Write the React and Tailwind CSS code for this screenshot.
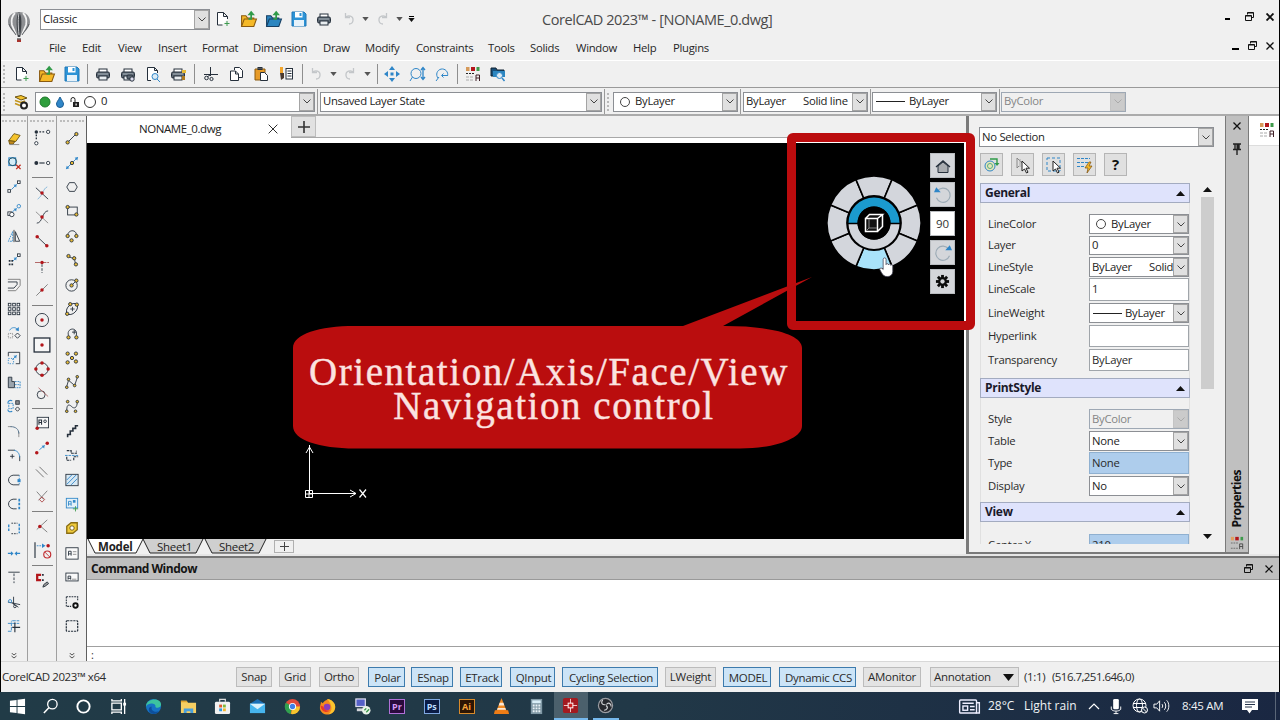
import React from "react";

const UI = "font-['Open_Sans','Noto_Sans',sans-serif]";
const K = "#26303c";
const B = "#2f86c8";
const G = "#e8bb36";
const R = "#b3161b";

function Ico({ children, c = "h-4 w-4" }) {
  return (
    <svg viewBox="0 0 16 16" className={"shrink-0 overflow-visible " + c} fill="none" stroke={K} strokeWidth="1">
      {children}
    </svg>
  );
}
const Dot = ({ x, y, f = G, r = 1.9, s = K }) => <circle cx={x} cy={y} r={r} fill={f} stroke={s} />;
const Red = ({ x, y }) => <circle cx={x} cy={y} r="2" fill={R} stroke="none" />;
const Sq = ({ x, y, w = 3, h = w, f = "#fff", s = K }) => <rect x={x} y={y} width={w} height={h} fill={f} stroke={s} />;

/* ---------- toolbar icons ---------- */
const NewDoc = () => (
  <Ico><path d="M7.5 14H2.5V1.5h6l4 4V8M8.500 1.500v4h4" fill="#fff" /><path d="M9.500 12.500h5M12 10v5" stroke="#3f9c50" /></Ico>
);
const Folder = ({ f = "#f5b928", d = "#8a5a10" }) => (
  <Ico c="h-[17px] w-[17px]">
    <path d="M1.500 14V4.500h4l1.500 2h6V8" fill={f} stroke={d} />
    <path d="M1.500 14.500l2.500-7h11.500l-2.500 7z" fill={f} stroke={d} />
    <path d="M8 7.500h2.500V2" stroke="#2f9a48" strokeWidth="1.600" /><path d="M8 3.500L10.500 0.500l2.500 3z" fill="#2f9a48" stroke="#2f9a48" />
  </Ico>
);
const Save = () => (
  <Ico><path d="M1 1h12l2 2v12H1z" fill="#2c93d6" stroke="#2179b8" /><rect x="4" y="1" width="7.500" height="5.500" fill="#fff" stroke="none" /><rect x="8.500" y="2" width="2" height="3" fill="#2c93d6" stroke="none" /><rect x="3" y="9" width="10" height="6" fill="#e6f2fa" stroke="none" /></Ico>
);
const Printer = ({ extra }) => (
  <Ico>
    <rect x="4" y="3" width="8" height="4" fill="#fff" />
    <rect x="1.500" y="6" width="13" height="6" rx="1.500" fill="#5d6873" />
    <rect x="4" y="10" width="8" height="4" fill="#e8edf0" /><path d="M3 8h10" stroke="#aab4bd" />
    {extra}
  </Ico>
);
const Undo = () => <Ico><path d="M4.500 2v4.500H9M4.500 6.500C7 3.500 12.500 5 12 9.500c-.3 2.500-2 3.500-4 3.500" stroke="#c3c6c9" strokeWidth="1.300" /></Ico>;
const Redo = () => <Ico><path d="M11.500 2v4.500H7M11.500 6.500C9 3.500 3.500 5 4 9.500c.3 2.500 2 3.500 4 3.500" stroke="#c3c6c9" strokeWidth="1.300" /></Ico>;
const Caret = ({ c = "#555" }) => <svg viewBox="0 0 8 5" className="h-[4px] w-[7px] shrink-0"><path d="M0 0h8L4 5z" fill={c} /></svg>;
const Palette = () => (
  <Ico>
    <rect x="1" y="1" width="3.500" height="4" fill="#d69a5a" stroke="none" /><rect x="6" y="1" width="4" height="4" fill={R} stroke="none" /><rect x="11.500" y="1" width="3" height="4" fill="#3d9a4a" stroke="none" />
    <path d="M1 7.500h9" stroke="#222" strokeDasharray="2 1" /><path d="M1 11h8M1 14h8" stroke="#aaa" strokeDasharray="3 1" />
    <path d="M11 15V9h3.500v6M11 12h3.500" stroke="#402028" />
  </Ico>
);

function Combo({ w, h = "h-[20px]", children, dis, cls = "" }) {
  return (
    <div className={`flex shrink-0 items-center overflow-hidden border text-[11.3px] tracking-[-0.28px] ${dis ? "border-[#9ea8b4] bg-[#f0f0f0] text-[#858585]" : "border-[#8c8f94] bg-white text-[#1c1c1c]"} ${h} ${w} ${cls}`}>
      <div className="flex h-full min-w-0 flex-1 items-center overflow-hidden whitespace-pre pl-[2px]">{children}</div>
      <div className={`flex h-full w-[15px] shrink-0 items-center justify-center border ${dis ? "border-[#c4c4c4] bg-[#cbcbcb]" : "border-[#a4a4a4] bg-[#e0e0e0]"}`}>
        <svg viewBox="0 0 8 5" className="h-[5px] w-[8px] shrink-0"><path d="M.5.5L4 4 7.500.5" fill="none" stroke={dis ? "#aaa" : "#444"} /></svg>
      </div>
    </div>
  );
}
const Cell = ({ w = "w-[25px]", children }) => <div className={`flex h-full shrink-0 items-center justify-center ${w}`}>{children}</div>;
const Sep = ({ w }) => <div className={`flex h-full shrink-0 items-center justify-center ${w}`}><div className="h-[20px] w-px bg-[#8e8e8e]" /></div>;
const Grip = () => <div className="h-[18px] w-[2px] shrink-0 border-l-2 border-dotted border-[#b8b8b8]" />;

const Restore = () => <svg viewBox="0 0 9 9" className="h-[9px] w-[9px] shrink-0"><path d="M2.500 2.500v-2h6v5h-2M.5 3.500h6v5h-6zM.5 4h6M2.500 1h6" fill="none" stroke="#111" /></svg>;
const Cross = ({ w = 1.2, c = "h-[8px] w-[8px]" }) => <svg viewBox="0 0 8 8" className={"shrink-0 " + c}><path d="M.5.5l7 7M7.500.5l-7 7" stroke="#111" strokeWidth={w} /></svg>;

/* ---------- menu ---------- */
const MENU = [
  ["File", "w-[33px]"], ["Edit", "w-[36px]"], ["View", "w-[40px]"], ["Insert", "w-[44px]"], ["Format", "w-[51px]"],
  ["Dimension", "w-[70px]"], ["Draw", "w-[42px]"], ["Modify", "w-[51px]"], ["Constraints", "w-[72px]"], ["Tools", "w-[42px]"],
  ["Solids", "w-[46px]"], ["Window", "w-[57px]"], ["Help", "w-[40px]"], ["Plugins", "w-[60px]"],
];

function Header() {
  return (
    <div className="flex h-[60px] shrink-0">
      <div className="w-[39px] shrink-0 pl-[6px] pt-[11px]">
        <svg viewBox="0 0 24 32" className="h-[32px] w-[24px]">
          <path d="M12 1C5 1 1 5 1 11c0 5 5 9 9 15h4c4-6 9-10 9-15C23 5 19 1 12 1z" fill="#8d8f92" />
          <path d="M8 2C5 5 4 9 5 14l5 12M16 2c3 3 4 7 3 12l-5 12" stroke="#f2f2f2" strokeWidth="1.800" fill="none" />
          <path d="M12 1c-3 4-3 12-1 25h2c2-13 2-21-1-25z" fill="#3e4247" />
          <path d="M12 2c-1 5-1 12 0 22" stroke="#c9cbcd" fill="none" />
          <path d="M2 13c1 4 5 7 7 11M22 13c-1 4-5 7-7 11" stroke="#5b5e62" fill="none" />
          <rect x="10" y="28.500" width="4" height="2.500" fill="#a8322c" /><path d="M10 28h4" stroke="#222" />
        </svg>
      </div>
      <div className="flex min-w-0 flex-1 flex-col">
        <div className="flex h-[38px] items-center">
          <Combo w="w-[170px]" h="h-[21px]"><span className="text-[11.500px]">Classic</span></Combo>
          <div className="flex items-center">
            <Cell><NewDoc /></Cell><Cell w="w-[26px]"><Folder /></Cell><Cell><Folder f="#2c86c0" d="#173f63" /></Cell><Cell><Save /></Cell><Cell w="w-[26px]"><Printer /></Cell>
            <Cell w="w-[23px]"><Undo /></Cell><Cell w="w-[10px]"><Caret /></Cell><Cell><Redo /></Cell><Cell w="w-[9px]"><Caret /></Cell>
            <div className="ml-[3px] flex w-[8px] flex-col items-center gap-px"><div className="h-px w-[5px] bg-black" /><Caret c="#111" /></div>
          </div>
          <div className="ml-[127px] w-[683px] whitespace-nowrap pt-[2px] text-[14.500px] tracking-[-0.440px] text-[#4a4a4a]">CorelCAD 2023™ - [NONAME_0.dwg]</div>
        </div>
        <div className="flex h-[22px] items-center pb-px pl-[9px]">
          {MENU.map(([t, w]) => <div key={t} className={`shrink-0 whitespace-nowrap text-[11.300px] tracking-[-0.280px] text-[#262626] ${w}`}>{t}</div>)}
        </div>
      </div>
      <div className="flex w-[60px] shrink-0 flex-col">
        <div className="flex h-[33px] items-center gap-[15px] pl-[6px]"><div className="mt-[5px] h-[2px] w-[5px] bg-black" /><Restore /><div className="-ml-[3px]"><Cross w={1.900} /></div></div>
        <div className="flex h-[25px] items-center gap-[9px] pl-[13px]"><div className="mt-[7px] h-[2px] w-[7px] bg-black" /><Restore /><Cross w={1.300} /></div>
      </div>
    </div>
  );
}

function Toolbar1() {
  return (
    <div className="flex h-[28px] shrink-0 items-center border-b border-t border-b-[#9a9a9a] border-t-white pl-[2px]">
      <Grip />
      <div className="w-[4px]" />
      <Cell><NewDoc /></Cell><Cell><Folder /></Cell><Cell><Save /></Cell><Sep w="w-[6px]" />
      <Cell><Printer /></Cell>
      <Cell><Printer extra={<><rect x="7" y="9" width="6" height="4" rx="1" fill="#5d6873" /><circle cx="12" cy="13" r="2.200" fill="#dde" /></>} /></Cell>
      <Cell><Ico><path d="M6 14.500H2.500V1.500h7l3 3V7M9.500 1.500v3h3" fill="#fff" /><circle cx="10" cy="10.500" r="3" stroke={B} fill="#dcebf5" /><path d="M12 13l3 3" stroke={B} /></Ico></Cell>
      <Cell><Printer extra={<><rect x="12" y="4" width="4" height="3" fill={G} stroke="none" /><rect x="12" y="10" width="3" height="4" fill="#b07a20" stroke="none" /></>} /></Cell>
      <Sep w="w-[8px]" />
      <Cell><Ico><path d="M7.500 1v9M1 8.500h14M7 9l-3 2" /><circle cx="3.500" cy="12" r="1.800" /><circle cx="8.500" cy="13" r="1.600" /></Ico></Cell>
      <Cell><Ico><path d="M6.500 4V1.500h5l3 3v7h-4" fill="#fff" /><path d="M2.500 5h5l3 3v6.500h-8z" fill="#fff" /><path d="M7.500 5v3h3" /></Ico></Cell>
      <Cell><Ico><path d="M2 3h10v11H2z" fill="#e79b28" stroke="#8a5a10" /><rect x="5" y="1.500" width="4" height="2" fill="#555" /><path d="M7.500 6.500h4l3 3v5h-7z" fill="#fff" /></Ico></Cell>
      <Cell><Ico><rect x="2" y="1" width="3" height="6" fill="#f1a52c" stroke="none" /><path d="M2 7h4v5L3 14z" fill="#4a3a30" stroke="none" /><rect x="8" y="2.500" width="6.500" height="10.500" fill="#fff" /><path d="M9.500 5h4M9.500 7.500h4M9.500 10h4" /></Ico></Cell>
      <Sep w="w-[8px]" />
      <Cell w="w-[19px]"><Undo /></Cell><Cell w="w-[16px]"><Caret /></Cell><Cell w="w-[18px]"><Redo /></Cell><Cell w="w-[16px]"><Caret /></Cell>
      <Sep w="w-[4px]" />
      <Cell><Ico><path d="M8 0l3 4H5zM8 16l3-4H5zM0 8l4-3v6zM16 8l-4-3v6z" fill={B} stroke="none" /><rect x="6.500" y="6.500" width="3" height="3" fill={B} stroke="none" /></Ico></Cell>
      <Cell><Ico><circle cx="7" cy="7.500" r="5" stroke={B} /><path d="M3.500 11L1 15" stroke={B} /><path d="M14 2v11M12 4l2-2.500L16 4M12 11l2 2.500L16 11" stroke={B} strokeWidth="1.300" /></Ico></Cell>
      <Cell><Ico><path d="M4 12A5.500 5.500 0 1 1 13.500 10M5 11l-3 4" stroke={B} /><path d="M13 9.500H8M9.500 7.500L7.500 9.500l2 2" stroke={B} /></Ico></Cell>
      <Sep w="w-[6px]" />
      <Cell><Palette /></Cell>
      <Cell><Ico><path d="M1 2h5l1 2h7v6H1z" fill="#174f7a" stroke="#123" /><path d="M3 5h12v6H3z" fill="#2c86c0" stroke="none" /><circle cx="9.500" cy="9.500" r="3" fill="#dcebf5" stroke={B} /><path d="M12 12l2.500 3" stroke={B} strokeWidth="1.500" /></Ico></Cell>
    </div>
  );
}

const Line = ({ w = "w-[4px]" }) => <div className={`flex h-full shrink-0 justify-center ${w}`}><div className="h-full w-px bg-[#9a9a9a]" /></div>;
function Toolbar2() {
  return (
    <div className="flex h-[28px] shrink-0 items-center border-b-2 border-[#ababab] pl-[2px] pt-px">
      <Grip />
      <div className="w-[8px]" />
      <Ico c="h-[16px] w-[16px]"><path d="M2 3l6-1.500L14 4 8 6z" fill="#f5c32c" stroke="#6b5310" /><path d="M2 6.500l6 2 4-1.500M2 9.500l5 2" stroke="#c2941a" strokeWidth="1.500" /><circle cx="11" cy="11.500" r="3" stroke="#222" strokeWidth="2" fill="#fff" /></Ico>
      <div className="w-[6px]" />
      <Combo w="w-[280px]">
        <svg viewBox="0 0 60 14" className="ml-[1px] h-[14px] w-[60px] shrink-0">
          <circle cx="6" cy="7" r="5" fill="#2f9e3c" stroke="#1f7a2b" /><path d="M21 2c2 4 3.500 5 3.500 7a3.500 3.500 0 0 1-7 0c0-2 1.500-3 3.500-7z" fill="#2f86c8" stroke="#1b5e94" />
          <path d="M32 7V4.500a2 2 0 0 1 4 0V7" fill="none" stroke="#222" /><rect x="34" y="7" width="6" height="5" fill="#222" /><rect x="36.500" y="8.500" width="1.200" height="2" fill="#fff" />
          <circle cx="51" cy="7" r="5.500" fill="#fff" stroke="#333" />
        </svg>
        <span className="ml-[2px]">0</span>
      </Combo>
      <Line w="w-[4px]" />
      <div className="w-[1px]" />
      <Combo w="w-[282px]">Unsaved Layer State</Combo>
      <Line w="w-[5px]" />
      <Grip />
      <div className="w-[4px]" />
      <Combo w="w-[125px]"><span className="ml-[4px] mr-[5px] h-[10px] w-[10px] rounded-full border border-[#444]" />ByLayer</Combo>
      <Line w="w-[5px]" />
      <Combo w="w-[125px]"><span className="w-[57px]">ByLayer</span>Solid line</Combo>
      <Line w="w-[4px]" />
      <Combo w="w-[125px]"><span className="ml-px mr-[4px] h-px w-[29px] bg-[#222]" />ByLayer</Combo>
      <Line w="w-[4px]" />
      <Combo w="w-[125px]" dis>ByColor</Combo>
    </div>
  );
}

/* ---------- vertical palettes ---------- */
const Arr = ({ x1 = 5, y1 = 11, x2 = 11, y2 = 5 }) => <><path d={`M${x1} ${y1}L${x2} ${y2}`} stroke={B} /><path d={`M${x2} ${y2}l-3.500 .5l3 3z`} fill={B} stroke="none" /></>;
const COL1 = [
  <><path d="M2 11l6-8 7 2-5 7z" fill="#f5c32c" stroke="#6b5310" /><path d="M2 11l7 1-2 3H3z" fill="#c48a1c" stroke="#6b5310" /><path d="M3 15.500h11" stroke="#888" /></>,
  <><rect x="2" y="2" width="8" height="9" fill="#d6ecf7" stroke={B} /><circle cx="6.500" cy="6.500" r="4.500" stroke="#145" /><path d="M10.500 10l5 5M15.500 10l-5 5" stroke="#c02a1e" strokeWidth="1.500" /></>,
  <><Sq x={1} y={11} /><Sq x={12} y={1} /><Arr /></>,
  <><Sq x={1} y={9} w={4} /><circle cx="5.500" cy="12" r="2.500" stroke={K} fill="#fff" /><circle cx="13.500" cy="2.500" r="2" stroke={B} /><Arr x1={6} y1={9} /></>,
  <><path d="M9.500 3v11h5z" /><path d="M6.500 3v11h-5z" stroke={B} strokeDasharray="2 1" /><path d="M8 1v14" stroke="#333" /></>,
  <><path d="M2 9h2M5 9h2M2 13h2M5 13h2" strokeWidth="2" /><Sq x={12} y={1} /><Arr x1={7} y1={9} x2={11} y2={5} /></>,
  <><path d="M1 1.500h14v7L10 14.500H1" stroke="#777" /><path d="M1 4.500h10.500v3L8 11.500H1" /></>,
  <>{[1, 6, 11].map((x) => [1, 6, 11].map((y) => <Sq key={x + "-" + y} x={x + 0.5} y={y + 0.500} w={3} />))}</>,
  <><path d="M3 5c2-4 7-4 9-1" stroke={B} /><path d="M13.500 6V1L9.500 4.500z" fill={B} stroke="none" /><rect x="1.500" y="8.500" width="5" height="5" strokeDasharray="1 1" stroke="#777" /><path d="M12 8l3 3-3 3-3-3z" /></>,
  <><path d="M1.500 6V1.500h13v13H10" /><path d="M1.500 8.500h6v6h-6z" strokeDasharray="1.500 1.500" stroke={B} /><Arr x1={6} y1={10} x2={11} y2={5} /></>,
  <><path d="M1.500 14.500v-12h4v5h3v7z" fill="#9aa4ad" /><path d="M9 7.500h6v7H9M9 11h5" stroke={B} strokeDasharray="2 1" /></>,
  <><path d="M1 5c0-3 2-4 5-3M1 12c0 3 3 3 5 2" stroke={B} strokeWidth="1.300" /><rect x="2" y="5" width="5" height="6" stroke={B} strokeDasharray="2 1" /><Sq x={10} y={2} w={4} f="#8d8f92" /><path d="M12 9l2.500 2.500L12 14l-2.500-2.500z" /></>,
  <><path d="M1 3h4M13.500 9v6" stroke="#888" /><path d="M4 3c6 0 9.500 3 9.500 8" stroke="#4a6a86" /></>,
  <><path d="M1 2.500h8M14.500 9v6" /><path d="M8 2.500c4 1 6 3 6.500 8" stroke={B} /><path d="M3.500 9.500h5M6 7v5" /></>,
  <><path d="M14 2.500H7c-7 1-7 10 0 11h7" /><path d="M14 2.500v11" stroke={B} strokeDasharray="1.500 1.500" /><rect x="12" y="7" width="3.500" height="3.500" fill={B} stroke="none" /></>,
  <><path d="M11 2.500H7c-7 1-7 10 0 11h4" /><path d="M14 2v12" stroke={B} strokeDasharray="3 1.500" strokeWidth="2" /></>,
  <><path d="M5 2.500h7M5 14.500h7" stroke={K} strokeDasharray="2 1" /><path d="M2 4v9M14 3v11" stroke={B} strokeDasharray="3 1.500" strokeWidth="1.600" /></>,
  <><path d="M1 8.500h5M15 8.500h-5" stroke={B} strokeWidth="1.300" /><path d="M7.500 8.500L4.500 6v5zM8.500 8.500L11.500 6v5z" fill={B} stroke="none" /></>,
  <><path d="M1.500 2.500h13" /><path d="M8 4v11" strokeDasharray="3 1.500" /></>,
  <><path d="M7.500 2v9M1 8l14 3M6 9l7 5" /><circle cx="3.500" cy="7" r="1.800" stroke={B} /><circle cx="9" cy="13" r="1.500" /></>,
  <><path d="M6 2h8M1 5h13M1 14h4V2" stroke={B} strokeDasharray="4 1" /><path d="M9 4v11M6 9.500h9" strokeWidth="1.300" /></>,
];
const COL2 = [
  <><circle cx="1.500" cy="1" r="2" fill={K} stroke="none" /><path d="M5 1h6" strokeDasharray="2 1.500" strokeWidth="1.500" /><Dot x={15} y={1} f="#fff" /><path d="M1.500 4v6" strokeDasharray="2 1.500" strokeWidth="1.500" /><Dot x={1.500} y={14} f="#fff" /></>,
  <><circle cx="1.500" cy="8" r="2.200" fill={K} stroke="none" /><path d="M5 8h6" strokeWidth="1.300" /><Dot x={15} y={8} f="#fff" /></>,
  null,
  <><path d="M1 2l14 13" /><path d="M14 1C9 3 9 11 3 15" stroke="#7fb4d8" /><Red x={8} y={8} /></>,
  <><path d="M1 2l14 13" stroke="#888" /><path d="M15 1C8 1 9 15 2 15" /><Red x={8} y={8} /></>,
  <><path d="M2.500 3l11 10.500" /><Red x={2.500} y={3} /><Red x={13.500} y={13.500} /></>,
  <><path d="M0 4h16" stroke="#a55" strokeDasharray="6 1" /><path d="M8 6v10" strokeDasharray="3 1.500" /><Red x={8} y={4} /></>,
  <><path d="M1.500 14.500l13-13" stroke="#777" /><Red x={8} y={8} /></>,
  null,
  <><circle cx="8" cy="8" r="7.500" /><Red x={8} y={8} /></>,
  <><rect x="-1" y="0" width="18" height="16" fill="#f7f7f7" strokeWidth="1.500" /><Red x={8} y={8} /></>,
  <><circle cx="8" cy="8" r="7" /><Red x={8} y={1} /><Red x={8} y={15} /><Red x={1} y={8} /><Red x={15} y={8} /></>,
  <><circle cx="7" cy="10" r="4.500" /><path d="M4 2l11 10" stroke="#a66" /></>,
  null,
  <><rect x="2.500" y="1.500" width="13" height="12" fill="#f8f8f8" /><path d="M4.500 10V4.500h3V10M4.500 7.500h3" strokeWidth="1.200" /><circle cx="11.500" cy="6" r="1.500" /><Red x={2.500} y={14} /></>,
  <><Arr x1={5} y1={10} x2={11} y2={5} /><Red x={2} y={13.500} /><Red x={14} y={2.500} /></>,
  <path d="M1 5l9 9M5 2l9 9" stroke="#666" />,
  <><path d="M2 3l8 9M14 2L4 13" stroke="#777" /><path d="M5 12l3-3 3 3-3 3z" stroke="#a44" /></>,
  null,
  <><path d="M14 1L2 12M6 8l8 7" stroke="#777" /><Red x={5.500} y={8.500} /></>,
  <><path d="M0 -2v18" strokeWidth="1.300" /><path d="M2 2h9" stroke={B} strokeDasharray="2 1" /><path d="M8 -0.500L12 2 8 4.500z" fill={B} stroke="none" /><Red x={15} y={2} /><circle cx="14" cy="12" r="4" stroke="#c02a2e" strokeWidth="1.300" /><path d="M11 9l6 6" stroke="#c02a2e" /></>,
  null,
  <><path d="M7 1H2.500v6H7" stroke={R} strokeWidth="2.600" /><path d="M8 1h2M8 7h2" strokeWidth="2" /><path d="M9 15l1-3 4-3 1.500 2-4 3z" fill="#999" /></>,
];
const COL3 = [
  <><path d="M3 13L13 3" /><Dot x={3} y={13} /><Dot x={13} y={3.500} /></>,
  <><path d="M2 14L14 2" stroke={B} /><path d="M1 15l1-4 3 3zM15 1l-1 4-3-3z" fill={B} stroke="none" /><Dot x={8} y={8} /></>,
  <path d="M5 3h6l3 5-3 5H5L2 8z" />,
  <><rect x="3" y="3.500" width="11" height="9" /><Dot x={3} y={3.500} /><Dot x={13} y={12} /></>,
  <><path d="M3 8c0-8 11-8 10 0" /><Dot x={3} y={8} /><Dot x={13} y={8} /><Dot x={7.500} y={13} /></>,
  <><path d="M4 4l7 3 1 7" /><Dot x={4} y={3.500} /><Dot x={10.500} y={6} /><Dot x={12.500} y={13} /></>,
  <><circle cx="7.500" cy="8.500" r="6.500" /><path d="M8 8l5-5" /><Dot x={7.500} y={8.500} /><Dot x={13} y={3} /></>,
  <><ellipse cx="8" cy="8" rx="7.500" ry="5" transform="rotate(-45 8 8)" /><path d="M6 8h5M8.500 5.500v5" /><Dot x={6} y={2.500} /><Dot x={13.500} y={3} /><Dot x={2.500} y={13.500} /></>,
  <><path d="M4 11C1 2 15 0 13 11M8 7h5M10.500 4.500v5" /><Dot x={4} y={13} /><Dot x={13} y={13} /></>,
  <><Dot x={3} y={3} /><Dot x={12.500} y={3} /><Dot x={8} y={8} /><Dot x={3} y={13} /><Dot x={12.500} y={12} /></>,
  <><path d="M2 13L4 6l7 6 3-9" /><Dot x={2} y={14} r={1.500} /><Dot x={4} y={5} r={1.500} /><Dot x={11} y={12} r={1.500} /><Dot x={14} y={2} r={1.500} /></>,
  <><path d="M2 13C2 4 6 7 8 9s6 2 6-6" /><Dot x={2} y={14} r={1.500} /><Dot x={3} y={3} r={1.500} /><Dot x={12} y={14} r={1.500} /><Dot x={14} y={3} r={1.500} /></>,
  <path d="M3 15v-3h4M6 11.500V8h4M9 8V5h4M12 5V2h3" strokeWidth="1.800" />,
  <><path d="M2 3h5v3h6V3M2 10v4h5M10 14V10h5" strokeDasharray="3 1" strokeWidth="1.300" /><path d="M0 8.500h16" stroke={B} strokeDasharray="3 1" /></>,
  <><rect x="1" y="1.500" width="14" height="13" fill="#d8e8f3" /><path d="M2 8l6-6M2 13L13 2M7 13.500L14 6.500" stroke={B} /></>,
  <><rect x="1.500" y="1.500" width="13" height="11" stroke={B} fill="#e3f0f8" /><path d="M4 10V5h3v5M4 8h3" stroke={B} /><rect x="9" y="3.500" width="3" height="3" fill={B} stroke="none" /><path d="M9 13.500h6M12 10.500v6" stroke="#3f9c50" /></>,
  <><path d="M2 6l5-4h7v8l-5 4H2z" fill="#f0cb3c" stroke="#8a6d14" strokeWidth="1.500" /><circle cx="8" cy="8" r="2.500" fill="#fff" stroke="#6b5310" /></>,
  <><rect x="1" y="2" width="14" height="13" fill="#fafafa" /><path d="M4 11V6h3v5M4 9h3" /><path d="M9 6.500h4M9 9.500h4" stroke="#888" /></>,
  <><rect x="1" y="3.500" width="14" height="9" fill="#fafafa" /><path d="M3.500 11V7h3v4M3.500 9.500h3" /><path d="M8 10.500h5" stroke="#888" /></>,
  <><path d="M1.500 2h13v5M1.500 2v11H7" strokeDasharray="2 1" strokeWidth="1.200" /><circle cx="12" cy="12" r="2.500" fill="#fff" stroke="#111" strokeWidth="2.200" /></>,
  <rect x="1.500" y="2" width="13" height="12" rx="1" strokeDasharray="2.500 1" strokeWidth="1.400" />,
];

const Chevrons = () => <svg viewBox="0 0 6 6" className="h-[6px] w-[6px]"><path d="M.5 0L3 2 5.500 0M.5 3L3 5 5.500 3" fill="none" stroke="#555" /></svg>;
function Palettes({ items, w, more, last }) {
  return (
    <div className={`flex h-full shrink-0 flex-col items-center overflow-hidden border-r pt-[4px] ${last ? "border-[#5f5f5f]" : "border-[#a0a0a0]"} ${w}`}>
      <div className="mb-[4px] h-[2px] w-[24px] shrink-0 border-t-2 border-dotted border-[#bdbdbd]" />
      {items.map((it, i) => it
        ? <div key={i} className="flex h-[24.400px] shrink-0 items-center"><Ico c="h-[14px] w-[14px]">{it}</Ico></div>
        : <div key={i} className="flex h-[5.600px] w-[21px] shrink-0 items-center"><div className="h-px w-full bg-[#808080]" /></div>)}
      {more && <div className="mb-[2px] mt-auto"><Chevrons /></div>}
    </div>
  );
}

/* ---------- drawing area ---------- */
const pt = (r, a) => [50 + r * Math.cos((a * Math.PI) / 180), 50 + r * Math.sin((a * Math.PI) / 180)].map((n) => n.toFixed(2)).join(" ");
const seg = (r1, r2, a, b) => `M${pt(r1, a)}A${r1} ${r1} 0 0 1 ${pt(r1, b)}L${pt(r2, b)}A${r2} ${r2} 0 0 0 ${pt(r2, a)}Z`;
function Wheel() {
  return (
    <svg viewBox="0 0 100 100" className="h-[100px] w-[100px]">
      {[0, 1, 2, 3, 4, 5, 6, 7].map((i) => <path key={i} d={seg(47, 27, i * 45 - 22.500, i * 45 + 22.500)} fill={i === 2 ? "#a9e3fa" : "#d3d6dc"} stroke="#000" strokeWidth="1.600" />)}
      <path d={seg(25.500, 16.500, 180, 360)} fill="#1b9ace" /><path d={seg(25.500, 16.500, 1, 179)} fill="#d3d6dc" />
      <path d="M24 50.500h52" stroke="#000" strokeWidth="1.600" /><circle cx="50" cy="50" r="16.500" fill="#000" />
      <path d="M41.500 45.500h12v13h-12zM41.500 45.500l4-4h13l-5 4M58.500 41.500v12l-5 5" stroke="#fff" strokeWidth="1.500" fill="#111" /><path d="M45 46v9h8M45 55l-3 3" stroke="#888" fill="none" />
    </svg>
  );
}
const NavBtn = ({ children, cls = "bg-[#d4d6da]" }) => <div className={`flex h-[25px] w-[25px] items-center justify-center border border-[#b9bcc0] text-[11.500px] ${cls}`}>{children}</div>;
const GearShape = () => (
  <Ico c="h-[15px] w-[15px]"><g fill="#0b0b0b" stroke="none">{[0, 45, 90, 135].map((a) => <rect key={a} x="6.500" y="1" width="3" height="14" transform={`rotate(${a} 8 8)`} />)}<circle cx="8" cy="8" r="4.700" /></g><circle cx="8" cy="8" r="2.300" fill="#d4d6da" stroke="none" /></Ico>
);

function Canvas() {
  return (
    <div className="relative h-[396px] shrink-0 overflow-hidden border-r-2 border-white bg-black">
      <svg viewBox="0 0 80 70" className="absolute left-[212px] top-[300px] h-[70px] w-[80px]" fill="none" stroke="#fff">
        <path d="M10.500 51V2M7 10l3.500-6L14 10M10 50.500h47M51 47l6 3.500-6 3.500" /><path d="M6.500 47.500h7v7h-7zM10 47v8M6 51h8" />
        <path d="M60.500 46.500l6.500 8M67 46.500l-6.500 8" strokeWidth="1.200" />
      </svg>
      <div className="absolute left-[737px] top-[30px]"><Wheel /></div>
      <svg viewBox="0 0 16 24" className="absolute left-[792px] top-[113px] h-[23px] w-[16px]"><path d="M4 13V3.500c0-2 3-2 3 0V9c0-1.500 2.500-1.500 2.500.3 0-1.300 2.500-1.300 2.500.5 0-1.200 2-1 2 .7V16c0 3-2 5.500-5.500 5.500S4 20 2 17l-1.500-3c0-2 2-2 3.500 0z" fill="#fff" stroke="#445" strokeWidth=".8" /></svg>
      <div className="absolute left-[843px] top-[10px] flex flex-col gap-[4px]">
        <NavBtn><Ico><path d="M1 9l7-6 7 6" strokeWidth="1.400" /><path d="M3 8v6.500h10V8L8 4z" fill="#a9acb0" /></Ico></NavBtn>
        <NavBtn><Ico c="h-[18px] w-[18px]"><path d="M3 4.500a6.300 6.300 0 1 1-.8 6" stroke="#9cabb6" /><path d="M0 5.500h6L2 1z" fill={B} stroke="none" /></Ico></NavBtn>
        <NavBtn cls="bg-white text-[#333]">90</NavBtn>
        <NavBtn><Ico c="h-[18px] w-[18px]"><path d="M13 4.500a6.300 6.300 0 1 0 .8 6" stroke="#9cabb6" /><path d="M16 5.500h-6L14 1z" fill={B} stroke="none" /></Ico></NavBtn>
        <NavBtn><GearShape /></NavBtn>
      </div>
    </div>
  );
}

function DocArea() {
  return (
    <div className="flex w-[879px] shrink-0 flex-col">
      <div className="flex h-[27px] shrink-0 bg-[#f0f0f0]">
        <div className="flex w-[204px] items-center bg-white pb-[2px] pl-[52px] text-[11.500px] text-[#222]">
          <span className="w-[129px] whitespace-nowrap tracking-[-0.420px]">NONAME_0.dwg</span><Cross w={0.700} c="h-[10px] w-[10px]" />
        </div>
        <div className="flex flex-1 flex-col">
          <div className="flex h-[22px] border-b border-[#a8a8a8]">
            <div className="flex w-[25px] items-center justify-center border border-[#bdbdbd] bg-[#e1e1e1]"><svg viewBox="0 0 12 12" className="h-[12px] w-[12px]"><path d="M6 0v12M0 6h12" stroke="#333" strokeWidth="1.600" /></svg></div>
          </div>
          <div className="flex-1 bg-white" />
        </div>
      </div>
      <Canvas />
      <div className="relative flex h-[15px] shrink-0 items-center bg-[#f0f0f0] text-[11.500px] text-[#222]">
        <svg viewBox="0 0 184 15" className="absolute left-0 top-0 h-[15px] w-[184px]" stroke="#222">
          <path d="M118 0l7 14h47l7-14" fill="#cfcfcf" /><path d="M56 0l7 14h46l7-14" fill="#cfcfcf" /><path d="M1 0l7 14h41l7-14" fill="#fff" />
        </svg>
        <div className="relative w-[59px] pl-[11px] font-bold tracking-[-0.200px]">Model</div>
        <div className="relative w-[62px] pl-[11px] tracking-[-0.300px]">Sheet1</div>
        <div className="relative w-[66px] pl-[11px] tracking-[-0.300px]">Sheet2</div>
        <div className="relative flex h-[13px] w-[20px] items-center justify-center border border-[#b0b0b0]"><svg viewBox="0 0 9 9" className="h-[9px] w-[9px]"><path d="M4.500 0v9M0 4.500h9" stroke="#444" /></svg></div>
      </div>
    </div>
  );
}

/* ---------- properties ---------- */
const Lbl = ({ children }) => <div className="w-[108px] shrink-0 pl-[7px]">{children}</div>;
const Field = ({ h, cls = "bg-white border-[#a0a5aa]", children }) => <div className={`flex w-[100px] shrink-0 items-center border pl-[2px] ${h} ${cls}`}>{children}</div>;
const Row = ({ label, children, mt }) => <div className={`flex shrink-0 items-center text-[#2a2a2a] ${mt}`}><Lbl>{label}</Lbl>{children}</div>;
const Sect = ({ t, mt }) => (
  <div className={`-ml-px flex h-[20px] w-[210px] shrink-0 items-center justify-between border border-[#a3abc0] bg-[#dfe3fc] pl-[4px] pr-[4px] text-[12px] font-bold tracking-[-0.300px] text-[#1a1a2a] ${mt}`}>
    {t}<svg viewBox="0 0 9 5" className="h-[5px] w-[9px]"><path d="M4.500 0L9 5H0z" fill="#111" /></svg>
  </div>
);
const PBtn = ({ children }) => <div className="flex h-[23px] w-[23px] items-center justify-center border border-[#b5b5b5] bg-[#e0e0e0]">{children}</div>;
const Cursor = <path d="M7 4v10l2.500-2 2 4 1.500-.8-2-4h3.500z" fill="#fff" stroke="#222" />;

function Properties() {
  return (
    <div className="flex w-[259px] shrink-0 flex-col border-b-2 border-l-[3px] border-[#7a7a7a] pl-[10px] pt-[11px] text-[11.300px] tracking-[-0.230px]">
      <Combo w="w-[235px]">No Selection</Combo>
      <div className="mt-[6px] flex shrink-0 gap-[8px] pl-px">
        <PBtn><Ico><circle cx="6" cy="9" r="5" stroke={B} fill="#e6e7b8" /><circle cx="6" cy="9" r="2.500" stroke="#5a8" /><path d="M6 2h7v5" stroke="#2f9a48" strokeWidth="1.400" /><path d="M13 9l-2.500-3h5z" fill="#2f9a48" stroke="none" /></Ico></PBtn>
        <PBtn><Ico><path d="M2 1v10l2-2M2 1l5 5" stroke="#888" /><path d="M5 2v8" stroke="#aaa" />{Cursor}</Ico></PBtn>
        <PBtn><Ico><rect x="1" y="1" width="13" height="13" stroke={B} strokeDasharray="3 2" />{Cursor}</Ico></PBtn>
        <PBtn><Ico><path d="M0 1.500h13M0 5.500h13M0 9.500h7" stroke={B} strokeDasharray="3 1" /><path d="M12 5l-4 6h3l-1 5 5-7h-3l2-4z" fill="#f5b928" stroke="#7a4d10" strokeWidth=".7" /></Ico></PBtn>
        <PBtn><span className="text-[15px] font-bold text-[#111]">?</span></PBtn>
      </div>
      <div className="mt-[7px] flex h-[361px] shrink-0 overflow-hidden pl-px">
        <div className="flex w-[210px] shrink-0 flex-col border-x border-[#e0e0e0]">
          <Sect t="General" mt="" />
          <Row label="LineColor" mt="mt-[11px]"><Combo w="w-[100px]"><span className="ml-[4px] mr-[5px] h-[10px] w-[10px] shrink-0 rounded-full border border-[#444]" />ByLayer</Combo></Row>
          <Row label="Layer" mt="mt-[2px]"><Combo w="w-[100px]" h="h-[19px]">0</Combo></Row>
          <Row label="LineStyle" mt="mt-[2px]"><Combo w="w-[100px]" h="h-[20px]"><span className="w-[57px] shrink-0">ByLayer</span>Solid</Combo></Row>
          <Row label="LineScale" mt="mt-[1px]"><Field h="h-[23px]">1</Field></Row>
          <Row label="LineWeight" mt="mt-[2px]"><Combo w="w-[100px]" h="h-[20px]"><span className="ml-px mr-[3px] h-px w-[29px] shrink-0 bg-[#222]" />ByLayer</Combo></Row>
          <Row label="Hyperlink" mt="mt-[2px]"><Field h="h-[22px]" /></Row>
          <Row label="Transparency" mt="mt-[2px]"><Field h="h-[22px]">ByLayer</Field></Row>
          <Sect t="PrintStyle" mt="mt-[7px]" />
          <Row label="Style" mt="mt-[11px]"><Combo w="w-[100px]" dis>ByColor</Combo></Row>
          <Row label="Table" mt="mt-[2px]"><Combo w="w-[100px]">None</Combo></Row>
          <Row label="Type" mt="mt-[1px]"><Field h="h-[22px]" cls="bg-[#aecdec] border-[#8fb0d0]">None</Field></Row>
          <Row label="Display" mt="mt-[2px]"><Combo w="w-[100px]">No</Combo></Row>
          <Sect t="View" mt="mt-[6px]" />
          <Row label="Center X" mt="mt-[12px]"><Field h="h-[22px]" cls="bg-[#aecdec] border-[#8fb0d0]">210</Field></Row>
        </div>
        <div className="ml-[10px] flex w-[14px] shrink-0 flex-col items-center pt-[4px]">
          <svg viewBox="0 0 9 5" className="h-[5px] w-[9px] shrink-0"><path d="M4.500 0L9 5H0z" fill="#111" /></svg>
          <div className="mt-[5px] h-[192px] w-[13px] shrink-0 bg-[#cdcdcd]" />
          <svg viewBox="0 0 9 5" className="mb-[5px] mt-auto h-[5px] w-[9px] shrink-0"><path d="M0 0h9L4.500 5z" fill="#111" /></svg>
        </div>
      </div>
    </div>
  );
}

function Rail() {
  return (
    <>
      <div className="flex w-[24px] shrink-0 flex-col items-center border-x border-b-2 border-[#7a7a7a] bg-[#c0c0c0] pb-[2px] pt-[6px]">
        <Cross w={1.300} />
        <svg viewBox="0 0 10 12" className="mt-[13px] h-[12px] w-[10px]"><path d="M1 1h8M3 1v5M7 1v5M1 6.500h8M5 7v5" stroke="#222" strokeWidth="1.400" fill="none" /><rect x="4.500" y="1" width="2.500" height="5.500" fill="#222" /></svg>
        <div className="mb-[9px] mt-auto rotate-180 text-[12px] font-bold tracking-[-0.500px] text-[#111] [writing-mode:vertical-rl]">Properties</div>
        <Ico c="h-[14px] w-[14px]"><rect x="1" y="1" width="3.500" height="4" fill="#e0a060" stroke="none" /><rect x="6" y="1" width="4" height="4" fill={R} stroke="none" /><rect x="12" y="1" width="3" height="4" fill="#3d9a4a" stroke="none" /><path d="M1 8h9M1 14h8" stroke="#666" strokeDasharray="2 1" /><path d="M11 15V9h3.500v6M11 12h3.500" stroke="#444" /></Ico>
      </div>
      <div className="flex flex-1 flex-col"><div className="flex h-[30px] items-center justify-center border-b border-[#ddd] bg-white pb-[2px] pl-[5px]"><Palette /></div></div>
    </>
  );
}

function Command() {
  return (
    <div className="flex h-[105px] shrink-0 flex-col">
      <div className="flex h-[24px] shrink-0 items-center border-b border-t-2 border-b-[#999] border-t-[#767676] bg-[#bfbfbf] pl-[4px] text-[12px] font-bold tracking-[-0.500px] text-[#151515]">
        <div className="flex-1">Command Window</div>
        <Restore /><div className="w-[12px]" /><Cross /><div className="w-[6px]" />
      </div>
      <div className="h-[67px] shrink-0 border-b border-[#a0a0a0] bg-white" />
      <div className="flex flex-1 items-center bg-white pl-[4px] text-[11px] text-[#333]">:</div>
    </div>
  );
}

/* ---------- status bar ---------- */
const ST = [
  ["Snap", 0, "w-[36px] mr-[7px]"], ["Grid", 0, "w-[32px] mr-[8px]"], ["Ortho", 0, "w-[40px] mr-[9px]"], ["Polar", 1, "w-[37px] mr-[6px]"],
  ["ESnap", 1, "w-[42px] mr-[7px]"], ["ETrack", 1, "w-[42px] mr-[8px]"], ["QInput", 1, "w-[45px] mr-[7px]"], ["Cycling Selection", 1, "w-[96px] mr-[7px]"],
  ["LWeight", 0, "w-[51px] mr-[7px]"], ["MODEL", 1, "w-[48px] mr-[8px]"], ["Dynamic CCS", 1, "w-[77px] mr-[7px]"], ["AMonitor", 0, "w-[58px] mr-[9px]"],
];
function Status() {
  return (
    <div className="flex h-[31px] shrink-0 items-center border-t border-[#d8d8d8] bg-[#f0f0f0] text-[11.500px] text-[#2b2b2b]">
      <div className="w-[235px] shrink-0 whitespace-nowrap pl-px tracking-[-0.420px]">CorelCAD 2023™ x64</div>
      {ST.map(([t, on, w]) => (
        <div key={t} className={`flex h-[20px] shrink-0 items-center justify-center whitespace-nowrap border tracking-[-0.300px] ${on ? "border-[#3d7bad] bg-[#cce4f7] pl-[2px] pt-px" : "border-[#bcbcbc] bg-[#e3e3e3]"} ${w}`}>{t}</div>
      ))}
      <div className="flex h-[20px] w-[89px] shrink-0 items-center justify-between border border-[#bcbcbc] bg-[#e3e3e3] pl-[3px] pr-[4px] tracking-[-0.300px]">Annotation<svg viewBox="0 0 11 7" className="h-[7px] w-[11px]"><path d="M0 0h11L5.500 7z" fill="#111" /></svg></div>
      <div className="w-[28px] shrink-0 whitespace-nowrap pl-[5px] tracking-[-0.300px]">(1:1)</div>
      <div className="whitespace-nowrap pl-[5px] tracking-[-0.550px]">(516.7,251.646,0)</div>
    </div>
  );
}

/* ---------- task bar ---------- */
const T = ({ children }) => <svg viewBox="0 0 18 18" className="h-[17px] w-[17px] shrink-0 overflow-visible" fill="none">{children}</svg>;
const Tile = ({ t, cls }) => <div className={`flex h-[15px] w-[16px] items-center justify-center border text-[9px] font-bold leading-none ${cls}`}>{t}</div>;
const APPS = [
  <T><path d="M1 3l7-1v6.500H1zM9 1.800L17 .8v7.700H9zM1 9.500h7V16l-7-1zM9 9.500h8v7.700l-8-1z" fill="#fff" /></T>,
  <T><circle cx="11" cy="6.500" r="5" stroke="#fff" strokeWidth="1.400" /><path d="M7.500 10L2 16" stroke="#fff" strokeWidth="1.600" /></T>,
  <T><circle cx="9" cy="9" r="6.500" stroke="#fff" strokeWidth="2" /></T>,
  <T><path d="M2 1v2h10V1M2 17v-2h10v2M2 5.500h10v7H2zM15.500 1v16" stroke="#fff" strokeWidth="1.400" /><rect x="14" y="5" width="3" height="3" fill="#fff" /></T>,
  <T><circle cx="9" cy="9" r="8" fill="#1672c4" /><path d="M1 9C1 0 17-1 17 7c0 4-6 4-6 2 1-3-7-5-10 0z" fill="#3cc3a0" /><path d="M7 9c-1 6 5 6 8 5-4 5-11 3-11-2 0-2 2-3 3-3z" fill="#0d4f9c" /></T>,
  <T><path d="M1 3h6l1.500 2H17v11H1z" fill="#f7cf62" /><path d="M1 3h6l1 1.500H1z" fill="#e0a32e" /><path d="M4 16v-5h10v5h-3v-2H7v2z" fill="#4aa0dc" /></T>,
  <T><rect x="1" y="4" width="16" height="13" rx="1.500" fill="#f1f1f1" /><path d="M6 4V1.500h6V4" stroke="#ddd" strokeWidth="1.300" /><rect x="5.500" y="7" width="3" height="3" fill="#e0592a" /><rect x="9.500" y="7" width="3" height="3" fill="#7fb93a" /><rect x="5.500" y="11" width="3" height="3" fill="#2f9ade" /><rect x="9.500" y="11" width="3" height="3" fill="#f4b52a" /></T>,
  <T><path d="M1 6l8-5 8 5v10H1z" fill="#1b6fb5" /><path d="M1 6h16v10H1z" fill="#46b5ee" /><path d="M1 6l8 6 8-6z" fill="#d9f1fc" /></T>,
  <T><circle cx="9" cy="9" r="8" fill="#e04a3a" /><path d="M9 9L2 5a8 8 0 0 0 5 12z" fill="#2fa14f" /><path d="M9 9h8a8 8 0 0 1-9.500 8z" fill="#f6c52d" /><circle cx="9" cy="9" r="3.800" fill="#fff" /><circle cx="9" cy="9" r="2.800" fill="#3f7fe8" /></T>,
  <T><path d="M2 4l2 1.500C6 2 8 3 9 1c6 1 9 6 8 10-2 9-15 8-16 0-.3-3 1-4 1-7z" fill="#f58a1f" /><path d="M9 1c6 1 9 6 8 10-1 4-4 6-7 6 5-4 4-9-1-16z" fill="#fbc52e" /><circle cx="8.500" cy="9.500" r="3.500" fill="#8a3dbd" /><path d="M1.500 8c1 8 8 8 10 5-4 1-6-1-7-4z" fill="#e8382c" /></T>,
  <T><rect x="2" y="1" width="10" height="8" fill="#5560c8" stroke="#dde" strokeWidth="1.300" /><path d="M3 11h9v3H3z" fill="#d4d6dc" /><circle cx="13" cy="13" r="4.500" fill="#e9f2e9" /><path d="M11 13l2-2M13 15l3-3" stroke="#3a9a4a" strokeWidth="1.400" /></T>,
  <Tile t="Pr" cls="border-[#b070d8] bg-[#2a0a3c] text-[#d79bf5]" />,
  <Tile t="Ps" cls="border-[#7fa8e0] bg-[#0b1c45] text-[#bcdcff]" />,
  <Tile t="Ai" cls="border-[#d88a2a] bg-[#2c1503] text-[#f7a53a]" />,
  <T><path d="M9 0l5.500 14h-11z" fill="#f08a24" /><path d="M7 5h4l1 3H6zM5 10.500h8l.7 2H4.300z" fill="#fbe9d8" /><path d="M2 13h14l1 4H1z" fill="#ef7d16" /></T>,
  <T><rect x="3" y="1" width="12" height="16" fill="#7f98a5" /><rect x="4.500" y="2.500" width="9" height="3" fill="#d9eef7" /><path d="M5 8h8M5 11h8M5 14h8" stroke="#e9f1f5" strokeWidth="2" strokeDasharray="2 1" /></T>,
  <T><rect x="1" y="1" width="16" height="16" rx="2" fill="#a31a20" /><path d="M9 2v14M2 9h14" stroke="#f2d0d0" /><rect x="6.500" y="6.500" width="5" height="5" fill="#c22" stroke="#fff" /></T>,
  <T><circle cx="9" cy="9" r="7.500" fill="#26282e" stroke="#9a9ca2" strokeWidth="1.300" /><path d="M9 8c-4 1-5-2-3-5M9.500 9c3 2 1 5-2 5M10 8c2-3 5-1 5 2" stroke="#d0d2d6" strokeWidth="1.200" /></T>,
];
function Taskbar() {
  return (
    <div className="flex h-[28px] shrink-0 items-center bg-gradient-to-r from-[#213b47] via-[#213847] to-[#1a2742] text-[12px] text-[#f0f3f5]">
      {APPS.map((a, i) => (
        <div key={i} className={`flex h-full shrink-0 flex-col items-center ${i === 0 ? "w-[34px]" : i === 3 ? "w-[36px]" : i < 3 ? "w-[33px]" : "w-[34.800px]"} ${i === 16 ? "bg-[#4b606c]" : ""}`}>
          <div className="flex flex-1 items-center">{a}</div>
          {i >= 16 && <div className={`h-[2px] shrink-0 bg-[#76b9ed] ${i === 16 ? "w-full" : "w-[26px]"}`} />}
        </div>
      ))}
      <div className="flex-1" />
      <div className="flex h-full w-[322px] shrink-0 items-center whitespace-nowrap">
        <svg viewBox="0 0 23 16" className="h-[15px] w-[23px]" fill="none" stroke="#eef"><rect x="1" y="1" width="18" height="14" rx="1" strokeWidth="1.500" /><path d="M19.500 4H22v11h-4M4 4.500h12M12 8h5M12 11.500h5" strokeWidth="1.500" /><rect x="4.500" y="7.500" width="5" height="4.500" strokeWidth="1.500" /></svg>
        <span className="ml-[7px] w-[36px]">28°C</span><span className="w-[63px]">Light rain</span>
        <svg viewBox="0 0 12 7" className="ml-px h-[7px] w-[12px]"><path d="M1 6l5-5 5 5" stroke="#fff" strokeWidth="1.200" fill="none" /></svg>
        <svg viewBox="0 0 12 18" className="ml-[10px] h-[17px] w-[12px]"><rect x="3" y="1" width="6" height="11" rx="1.500" fill="#fff" /><path d="M1 9v3c2 2.500 8 2.500 10 0V9M6 14v3M3.500 16.500h5" stroke="#fff" fill="none" /></svg>
        <svg viewBox="0 0 16 16" className="ml-[10px] h-[16px] w-[16px]" fill="none" stroke="#fff"><circle cx="7.500" cy="7.500" r="6.500" /><ellipse cx="7.500" cy="7.500" rx="3" ry="6.500" /><path d="M1 5.500h13M1 9.500h13" /><circle cx="12.500" cy="12" r="3" fill="#1d2d43" /><path d="M10.500 10l4 4" /></svg>
        <svg viewBox="0 0 18 14" className="ml-[5px] h-[14px] w-[17px]" fill="none" stroke="#fff"><path d="M1 5h3l3-3.500v11L4 9H1zM9.500 5c1 1 1 3 0 4M12 3c2 2 2 6 0 8M14.500 1c3 3 3 9 0 12" /></svg>
        <span className="ml-[12px] w-[59px] text-[11.500px] tracking-[-0.300px]">8:45 AM</span>
        <svg viewBox="0 0 16 16" className="ml-px h-[16px] w-[16px]"><path d="M0 1h16v11h-6l-2.500 3.500L5 12H0z" fill="#fff" /><path d="M3 4h10M3 6.500h10M3 9h7" stroke="#26344a" /></svg>
        <div className="ml-[17px] h-full w-px bg-[#5a6678]" />
      </div>
    </div>
  );
}

function Callout() {
  return (
    <>
      <div className="absolute left-[787px] top-[133px] h-[197px] w-[188px] rounded-[6px] border-[9px] border-[#bb0c0e]" />
      <svg viewBox="0 0 540 190" className="absolute left-[280px] top-[270px] h-[190px] w-[540px]">
        <path d="M403 56L532 7 443 56H445C490 56 522 64 522 78V156C522 168 496 178.500 460 178.500H75C39 178.500 13 170 13 156V78C13 64 39 56 75 56Z" fill="#ba0d0e" />
      </svg>
      <div className="absolute left-[293px] top-[326px] flex h-[122px] w-[510px] flex-col items-center whitespace-nowrap pt-[29px] font-['Liberation_Serif',serif] text-[39px] leading-[34px] text-[#fbe3e0] [-webkit-text-stroke:0.400px_#fbe3e0]">
        <div className="ml-[2px] tracking-[1.550px]">Orientation/Axis/Face/View</div>
        <div className="ml-[12px] tracking-[1.550px]">Navigation control</div>
      </div>
    </>
  );
}

export default function App() {
  return (
    <div className={`relative flex h-[720px] w-[1280px] flex-col overflow-hidden bg-[#f0f0f0] ${UI}`}>
      <div className="flex h-[692px] shrink-0 flex-col border-x border-black">
        <Header />
        <Toolbar1 />
        <Toolbar2 />
        <div className="flex h-[545px] shrink-0">
          <Palettes items={COL1} w="w-[27px]" more />
          <Palettes items={COL2} w="w-[29px]" />
          <Palettes items={COL3} w="w-[30px]" more last />
          <div className="flex min-w-0 flex-1 flex-col">
            <div className="flex h-[438px] shrink-0"><DocArea /><Properties /><Rail /></div>
            <div className="h-[2px] shrink-0 bg-[#e6e6e6]" />
            <Command />
          </div>
        </div>
        <Status />
      </div>
      <Taskbar />
      <Callout />
    </div>
  );
}
